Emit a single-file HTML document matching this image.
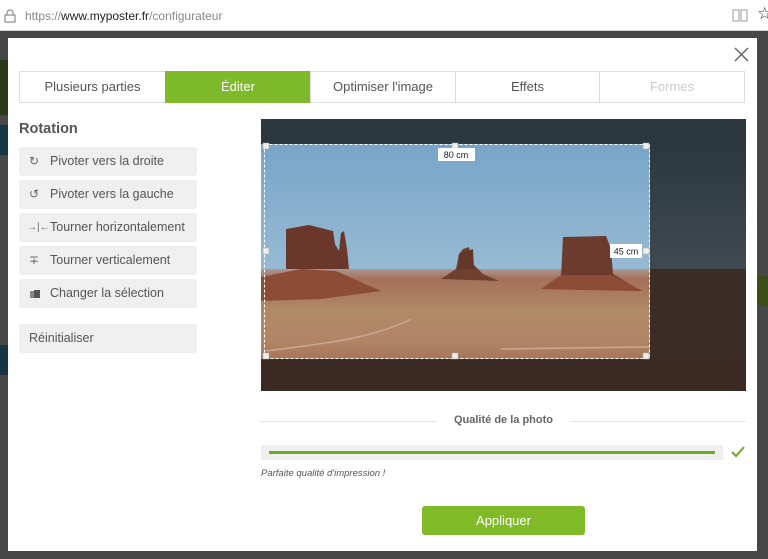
<!DOCTYPE html>
<html><head><meta charset="utf-8"><style>
*{margin:0;padding:0;box-sizing:border-box}
body{width:768px;height:559px;overflow:hidden;background:#474747;font-family:"Liberation Sans",Arial,sans-serif;position:relative}
.abs{position:absolute}
.url{left:0;top:0;width:768px;height:31px;background:#fff;border-bottom:1px solid #cfcfcf}
.modal{left:8px;top:38px;width:749px;height:513px;background:#fff}
.tab{position:absolute;top:71px;height:32px;border:1px solid #ddd;background:#fff;color:#555;font-size:13px;text-align:center;line-height:30px}
.btn{position:absolute;left:19px;width:178px;height:29px;background:#efefef;border-radius:3px;color:#555;font-size:12.5px;line-height:29px;padding-left:31px}
.ic{position:absolute;left:10px;top:0;font-size:12px;color:#666}
</style></head><body>
<div class="abs url">
<svg class="abs" style="left:4px;top:9px" width="12" height="14"><rect x="1" y="6" width="10" height="7" fill="none" stroke="#777"/><path d="M3 6V4a3 3 0 0 1 6 0v2" fill="none" stroke="#777"/></svg>
<div class="abs" style="left:25px;top:9px;font-size:12px;color:#888">https://<span style="color:#222">www.myposter.fr</span>/configurateur</div>
<svg class="abs" style="left:732px;top:9px" width="16" height="13"><path d="M1 1h6v11H1zM9 1h6v11H9z" fill="none" stroke="#999"/></svg>
<div class="abs" style="left:757px;top:4px;font-size:17px;color:#333">☆</div>
</div>
<div class="abs" style="left:0;top:60px;width:8px;height:55px;background:#2d3a1a"></div>
<div class="abs" style="left:0;top:125px;width:8px;height:30px;background:#173645"></div>
<div class="abs" style="left:0;top:345px;width:8px;height:30px;background:#173645"></div>
<div class="abs" style="left:757px;top:276px;width:11px;height:30px;background:#3c4d18"></div>
<div class="abs modal"></div>
<svg class="abs" style="left:734px;top:47px" width="15" height="15"><path d="M1 1L14 14M14 1L1 14" stroke="#666" stroke-width="1.5"/></svg>
<div class="tab" style="left:19px;width:147px">Plusieurs parties</div>
<div class="tab" style="left:165px;width:146px;background:#7db928;border-color:#7db928;color:#fff">Éditer</div>
<div class="tab" style="left:310px;width:146px">Optimiser l'image</div>
<div class="tab" style="left:455px;width:145px">Effets</div>
<div class="tab" style="left:599px;width:146px;color:#ccc">Formes</div>
<div class="abs" style="left:19px;top:121px;font-size:14.5px;font-weight:bold;color:#555">Rotation</div>
<div class="btn" style="top:147px"><span class="ic">↻</span>Pivoter vers la droite</div>
<div class="btn" style="top:180px"><span class="ic">↺</span>Pivoter vers la gauche</div>
<div class="btn" style="top:213px"><span class="ic" style="left:8px;font-size:10px">→|←</span>Tourner horizontalement</div>
<div class="btn" style="top:246px"><span class="ic">∓</span>Tourner verticalement</div>
<div class="btn" style="top:279px"><span class="ic"><svg width="12" height="12" style="margin-top:8px"><rect x="1" y="4" width="5" height="7" fill="#888"/><rect x="5" y="3" width="6" height="8" fill="#555"/></svg></span>Changer la sélection</div>
<div class="btn" style="top:324px;padding-left:10px">Réinitialiser</div>
<svg class="abs" style="left:261px;top:119px" width="485" height="272">
<defs>
<linearGradient id="sky" x1="0" y1="0" x2="0" y2="1"><stop offset="0" stop-color="#72a0c6"/><stop offset="1" stop-color="#b4cfdc"/></linearGradient>
<linearGradient id="gr" x1="0" y1="0" x2="0" y2="1"><stop offset="0" stop-color="#a99890"/><stop offset=".08" stop-color="#a5705a"/><stop offset=".35" stop-color="#b08a66"/><stop offset=".6" stop-color="#b28466"/><stop offset="1" stop-color="#8e5a3e"/></linearGradient>
<linearGradient id="dk" x1="0" y1="0" x2="0" y2="1"><stop offset="0" stop-color="#2b383f"/><stop offset="1" stop-color="#3f4a50"/></linearGradient>
</defs>
<rect width="485" height="272" fill="url(#sky)"/>
<rect y="150" width="485" height="122" fill="url(#gr)"/>
<path d="M0 158L40 150 75 152 120 172 60 180 0 182z" fill="#8d4c36"/>
<path d="M25 110L48 106 72 112 74 125 78 132 80 114 83 112 86 130 88 150 25 150z" fill="#6a382b"/>
<path d="M180 160L195 150 198 135 202 130 208 128 212 145 222 155 238 162z" fill="#70402f"/>
<path d="M198 135L197 150 213 150 212 130z" fill="#65362a"/>
<path d="M302 118L345 117 350 130 352 155 380 172 282 170 300 158z" fill="#6d3b2d"/>
<path d="M280 170L300 156 350 156 382 172z" fill="#8d4c36"/>
<path d="M5 232C60 225 110 220 150 200M240 230L388 228M100 244L200 240" stroke="#c8a994" stroke-width="1.5" fill="none"/>
<rect x="0" y="0" width="485" height="25" fill="#2b383f"/>
<rect x="389" y="25" width="96" height="125" fill="url(#dk)"/>
<rect x="389" y="150" width="96" height="90" fill="#3b2d26"/>
<rect x="0" y="240" width="485" height="32" fill="#3a2a22"/>
<rect x="3.5" y="25.5" width="385" height="214" fill="none" stroke="#fff" stroke-dasharray="3 2"/>
<g fill="#eee" stroke="#aaa" stroke-width=".5">
<rect x="2" y="24" width="6" height="6"/><rect x="191" y="24" width="6" height="6"/><rect x="382" y="24" width="6" height="6"/>
<rect x="2" y="129" width="6" height="6"/><rect x="382" y="129" width="6" height="6"/>
<rect x="2" y="234" width="6" height="6"/><rect x="191" y="234" width="6" height="6"/><rect x="382" y="234" width="6" height="6"/>
</g>
<rect x="177" y="29" width="37" height="13" fill="#fff"/>
<text x="195" y="39" font-size="9" text-anchor="middle" font-family="Liberation Sans" fill="#222">80 cm</text>
<rect x="349" y="125" width="32" height="14" fill="#fff"/>
<text x="365" y="135.5" font-size="9" text-anchor="middle" font-family="Liberation Sans" fill="#222">45 cm</text>
</svg>
<div class="abs" style="left:261px;top:421px;width:176px;height:1px;background:#e4e4e4"></div>
<div class="abs" style="left:570px;top:421px;width:176px;height:1px;background:#e4e4e4"></div>
<div class="abs" style="left:437px;top:414px;width:133px;text-align:center;font-size:11px;font-weight:bold;color:#666">Qualité de la photo</div>
<div class="abs" style="left:261px;top:445px;width:462px;height:15px;background:#efefef"></div>
<div class="abs" style="left:269px;top:451px;width:446px;height:3px;background:#6aaa24"></div>
<svg class="abs" style="left:731px;top:446px" width="14" height="12"><path d="M1 6L5 10 13 1" stroke="#6aaa24" stroke-width="2" fill="none"/></svg>
<div class="abs" style="left:261px;top:468px;font-size:9.5px;font-style:italic;color:#555">Parfaite qualité d'impression !</div>
<div class="abs" style="left:422px;top:506px;width:163px;height:29px;background:#80ba27;border-radius:3px;color:#fff;font-size:13px;text-align:center;line-height:29px">Appliquer</div>
</body></html>
